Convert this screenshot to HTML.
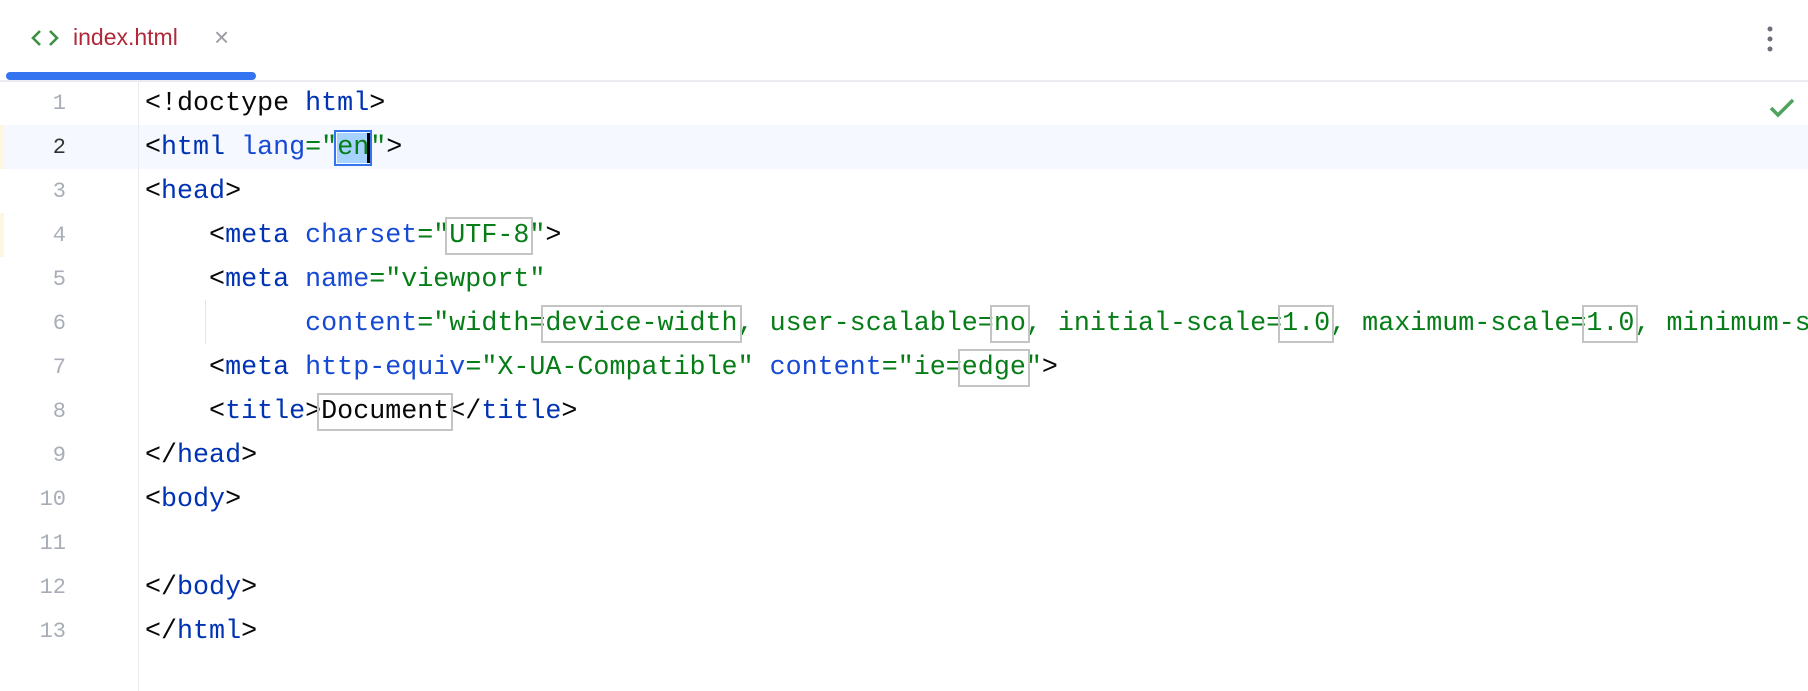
<!DOCTYPE html>
<html><head><style>
body{margin:0;width:1808px;height:691px;background:#fff;overflow:hidden;position:relative;font-family:"Liberation Sans",sans-serif}
.hdr{position:absolute;left:0;top:0;width:1808px;height:80px;border-bottom:2px solid #ebecf0}
.ul{position:absolute;left:6px;top:72px;width:250px;height:8px;background:#3574f0;border-radius:4px}
.tab{position:absolute;left:73px;top:24px;font-size:23px;color:#b0283a}
.x{position:absolute;left:214px;top:22px;font-size:26px;color:#9a9ca3}
.gut{position:absolute;left:138px;top:82px;width:1px;height:609px;background:#ebecf0}
.hl{position:absolute;left:0;top:125px;width:1808px;height:44px;background:#f5f8fe}
.mk{position:absolute;left:0;width:4px;height:44px;background:#fdf6e0}
.ln{position:absolute;left:0;width:66px;text-align:right;font-family:"Liberation Mono",monospace;font-size:22px;color:#a8adb8;line-height:44px}
pre{position:absolute;left:145px;top:82px;width:1663px;overflow:hidden;margin:0;font-family:"Liberation Mono",monospace;font-size:26.7px;line-height:44px;color:#080808}
.t{color:#0033b3}.a{color:#174ad4}.v{color:#067d17}
.b{outline:2px solid #c4c4c4;outline-offset:2px}
.sel{background:#a6d2ff;outline:2px solid #3574f0;outline-offset:1px}
.guide{position:absolute;left:205px;top:300px;width:1px;height:44px;background:#e4e4e4}
</style></head><body>
<div class="hdr"></div>
<svg style="position:absolute;left:31px;top:28px" width="28" height="20" viewBox="0 0 28 20"><path d="M9 3 L2 10 L9 17 M19 3 L26 10 L19 17" fill="none" stroke="#3d8f43" stroke-width="2.6"/></svg>
<div class="tab">index.html</div>
<div class="x">×</div>
<div class="ul"></div>
<svg style="position:absolute;left:1765px;top:24px" width="10" height="32"><circle cx="5" cy="5" r="2.5" fill="#6c707e"/><circle cx="5" cy="15" r="2.5" fill="#6c707e"/><circle cx="5" cy="25" r="2.5" fill="#6c707e"/></svg>
<div class="hl"></div>
<div class="mk" style="top:125px"></div><div class="mk" style="top:213px"></div>
<div class="gut"></div>
<div class="guide"></div>
<svg style="position:absolute;left:1768px;top:97px" width="28" height="22"><path d="M3 11 L10 18 L25 3" fill="none" stroke="#4da45c" stroke-width="3.5"/></svg>
<div class="ln" style="top:82px">1<br><span style="color:#333">2</span><br>3<br>4<br>5<br>6<br>7<br>8<br>9<br>10<br>11<br>12<br>13</div>
<pre>&lt;!doctype <span class="t">html</span>&gt;
&lt;<span class="t">html</span> <span class="a">lang</span><span class="v">="<span class="sel">en</span><span style="border-left:3px solid #000;margin-left:-2px"></span>"</span>&gt;
&lt;<span class="t">head</span>&gt;
    &lt;<span class="t">meta</span> <span class="a">charset</span><span class="v">="<span class="b">UTF-8</span>"</span>&gt;
    &lt;<span class="t">meta</span> <span class="a">name</span><span class="v">="viewport"</span>
          <span class="a">content</span><span class="v">="width=<span class="b">device-width</span>, user-scalable=<span class="b">no</span>, initial-scale=<span class="b">1.0</span>, maximum-scale=<span class="b">1.0</span>, minimum-scale=1.0"</span>
    &lt;<span class="t">meta</span> <span class="a">http-equiv</span><span class="v">="X-UA-Compatible"</span> <span class="a">content</span><span class="v">="ie=<span class="b">edge</span>"</span>&gt;
    &lt;<span class="t">title</span>&gt;<span class="b">Document</span>&lt;/<span class="t">title</span>&gt;
&lt;/<span class="t">head</span>&gt;
&lt;<span class="t">body</span>&gt;

&lt;/<span class="t">body</span>&gt;
&lt;/<span class="t">html</span>&gt;</pre>
</body></html>
